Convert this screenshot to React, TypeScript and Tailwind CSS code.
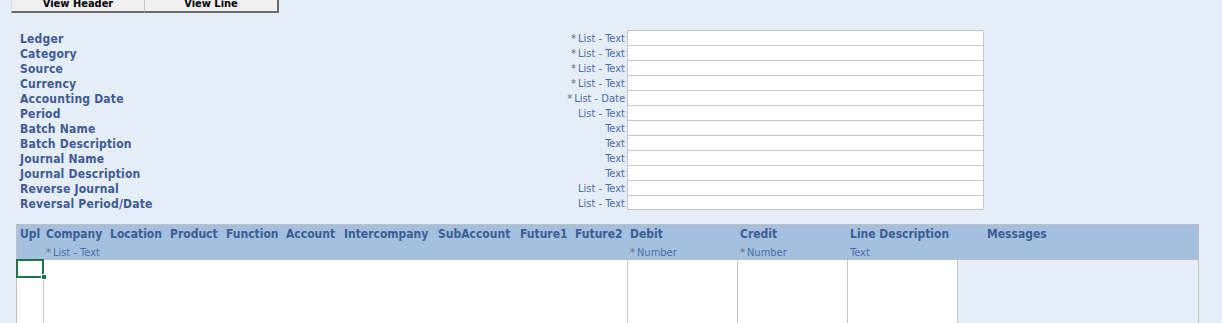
import React from 'react';

const fields: { label: string; type: string; req: boolean }[] = [
  { label: 'Ledger', type: 'List - Text', req: true },
  { label: 'Category', type: 'List - Text', req: true },
  { label: 'Source', type: 'List - Text', req: true },
  { label: 'Currency', type: 'List - Text', req: true },
  { label: 'Accounting Date', type: 'List - Date', req: true },
  { label: 'Period', type: 'List - Text', req: false },
  { label: 'Batch Name', type: 'Text', req: false },
  { label: 'Batch Description', type: 'Text', req: false },
  { label: 'Journal Name', type: 'Text', req: false },
  { label: 'Journal Description', type: 'Text', req: false },
  { label: 'Reverse Journal', type: 'List - Text', req: false },
  { label: 'Reversal Period/Date', type: 'List - Text', req: false },
];

const segments: { name: string; w: string }[] = [
  { name: 'Company', w: 'w-[64px]' },
  { name: 'Location', w: 'w-[60px]' },
  { name: 'Product', w: 'w-[56px]' },
  { name: 'Function', w: 'w-[60px]' },
  { name: 'Account', w: 'w-[58px]' },
  { name: 'Intercompany', w: 'w-[94px]' },
  { name: 'SubAccount', w: 'w-[82px]' },
  { name: 'Future1', w: 'w-[55px]' },
  { name: 'Future2', w: 'w-[52px]' },
];

const font = "font-['DejaVu_Sans_Condensed','DejaVu_Sans',sans-serif]";

function Req() {
  return <span className="text-[#6a6a6a] mr-[2px]">*</span>;
}

export default function App() {
  return (
    <div className={`w-[1222px] h-[323px] overflow-hidden bg-[#e5edf7] ${font}`}>
      {/* top buttons, clipped at the top edge */}
      <div className="flex pl-[11px] -mt-[3px]">
        <div className="w-[133px] h-[16px] flex items-end justify-center pb-[2px] bg-[#f0f0f0] border-l border-[#e0e0e0] border-b-2 border-b-[#6a6a6a] text-[11px] font-bold leading-none text-black">
          View Header
        </div>
        <div className="w-[135px] h-[16px] flex items-end justify-center pb-[2px] bg-[#f0f0f0] border-l border-l-[#c8c8c8] border-b-2 border-b-[#6a6a6a] border-r-2 border-r-[#6a6a6a] text-[11px] font-bold leading-none text-black">
          View Line
        </div>
      </div>

      {/* header form */}
      <div className="w-[984px] pl-[20px] mt-[17px]">
        {fields.map((f, i) => (
          <div key={f.label} className="flex h-[15px] items-center">
            <div className="flex-1 text-[12px] font-bold text-[#3f5b93] leading-none pt-[2px] tracking-[0.2px]">
              {f.label}
            </div>
            <div className="text-[11px] text-[#4d6ca6] leading-none pr-[2px] pt-[2px]">
              {f.req && <Req />}
              {f.type}
            </div>
            <div
              className={`w-[357px] h-[15px] bg-white border-x border-t border-[#c6c6c6] ${
                i === fields.length - 1 ? 'border-b' : ''
              }`}
            />
          </div>
        ))}
      </div>

      {/* lines table */}
      <div className="ml-[16px] mt-[14px] w-[1183px] border-l border-t border-r border-[#c0c0c0]">
        <div className="flex h-[35px] bg-[#a3c1df] border-b border-[#c0c0c0] leading-none">
          <div className="w-[27px] pl-[3px] pt-[3px] text-[12px] font-bold text-[#3f5b93]">Upl</div>
          <div className="w-[584px] pl-[2px] pt-[3px] flex flex-col">
            <div className="flex text-[12px] font-bold text-[#3f5b93]">
              {segments.map((s) => (
                <span key={s.name} className={s.w}>
                  {s.name}
                </span>
              ))}
            </div>
            <div className="mt-[7px] text-[11px] text-[#4d6ca6]">
              <Req />List - Text
            </div>
          </div>
          <div className="w-[110px] pl-[2px] pt-[3px] flex flex-col">
            <span className="text-[12px] font-bold text-[#3f5b93]">Debit</span>
            <span className="mt-[7px] text-[11px] text-[#4d6ca6]">
              <Req />Number
            </span>
          </div>
          <div className="w-[110px] pl-[2px] pt-[3px] flex flex-col">
            <span className="text-[12px] font-bold text-[#3f5b93]">Credit</span>
            <span className="mt-[7px] text-[11px] text-[#4d6ca6]">
              <Req />Number
            </span>
          </div>
          <div className="w-[110px] pl-[2px] pt-[3px] flex flex-col">
            <span className="text-[12px] font-bold text-[#3f5b93]">Line Description</span>
            <span className="mt-[7px] text-[11px] text-[#4d6ca6]">Text</span>
          </div>
          <div className="flex-1 pl-[29px] pt-[3px] text-[12px] font-bold text-[#3f5b93]">Messages</div>
        </div>

        <div className="flex h-[70px]">
          <div className="w-[27px] bg-white border-r border-[#c6c6c6] relative">
            <div className="absolute -left-[1px] -top-[1px] w-[28px] h-[19px] border-2 border-[#217346]" />
            <div className="absolute left-[24px] top-[14px] w-[6px] h-[6px] bg-[#217346] border border-white" />
          </div>
          <div className="w-[584px] bg-white border-r border-[#c6c6c6]" />
          <div className="w-[110px] bg-white border-r border-[#c6c6c6]" />
          <div className="w-[110px] bg-white border-r border-[#c6c6c6]" />
          <div className="w-[110px] bg-white border-r border-[#c6c6c6]" />
          <div className="flex-1 bg-[#e5edf7]" />
        </div>
      </div>
    </div>
  );
}
